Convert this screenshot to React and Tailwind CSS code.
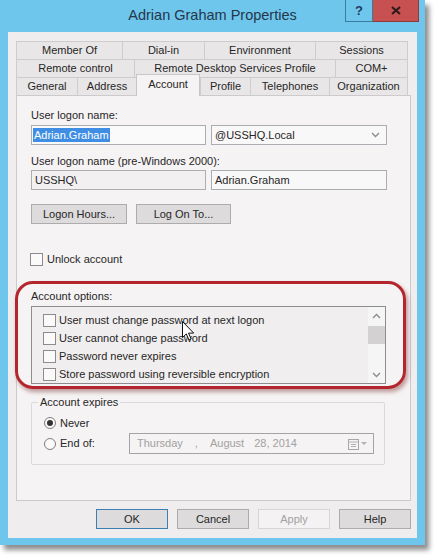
const rowOne = [
  { label: 'Member Of', w: 'w-[106px]' },
  { label: 'Dial-in', w: 'w-[82px]' },
  { label: 'Environment', w: 'w-[111px]' },
  { label: 'Sessions', w: 'w-[93px]' },
];

const rowTwo = [
  { label: 'Remote control', w: 'w-[118px]' },
  { label: 'Remote Desktop Services Profile', w: 'w-[201px]' },
  { label: 'COM+', w: 'w-[73px]' },
];

const rowThree = [
  { label: 'General', w: 'w-[61px]' },
  { label: 'Address', w: 'w-[59px]' },
  { label: 'Account', w: 'w-[64px]', active: true },
  { label: 'Profile', w: 'w-[50px]' },
  { label: 'Telephones', w: 'w-[79px]' },
  { label: 'Organization', w: 'w-[79px]' },
];

const options = [
  'User must change password at next logon',
  'User cannot change password',
  'Password never expires',
  'Store password using reversible encryption',
];

const TabRow = ({ tabs }) => (
  <div className="flex items-end h-[18px]">
    {tabs.map((t) =>
      t.active ? (
        <div
          key={t.label}
          className={`${t.w} h-[22px] -mb-px relative z-10 flex items-center justify-center border border-b-0 border-[#c9c6c7] bg-[#f6f3f4] pb-[2px]`}
        >
          {t.label}
        </div>
      ) : (
        <div
          key={t.label}
          className={`${t.w} h-[18px] flex items-center justify-center border-t border-l last:border-r border-[#cfcccd] bg-[#e9e6e7]`}
        >
          {t.label}
        </div>
      )
    )}
  </div>
);

const Check = () => <span className="w-[13px] h-[13px] border border-[#8d8b8c] bg-[#fbfafa] shrink-0" />;

const Chevron = ({ up }) => (
  <svg width="9" height="6" viewBox="0 0 9 6" className={up ? 'rotate-180' : ''}>
    <path d="M1 1l3.5 3.5L8 1" fill="none" stroke="#8a8a8a" strokeWidth="1.3" />
  </svg>
);

const Cursor = () => (
  <svg width="12" height="20" viewBox="0 0 12 20" className="absolute left-[150px] top-[14px] z-20">
    <path d="M0.5 0.5v16l3.8-3.6 2.6 6 2.2-1-2.6-5.8h5.2z" fill="#fff" stroke="#111" strokeWidth="1" strokeLinejoin="round" />
  </svg>
);

const Btn = ({ children, className = '' }) => (
  <div className={`h-[20px] flex items-center justify-center border ${className}`}>{children}</div>
);

export default function App() {
  return (
    <div className="w-[441px] h-[559px] bg-white font-['Liberation_Sans',Arial,sans-serif] text-[11px] text-[#262626]">
      <div className="relative w-[425px] h-[545px] bg-[#6ec6ec] flex flex-col shadow-[4px_5px_5px_rgba(0,0,0,0.45)]">
        {/* title bar */}
        <div className="h-[32px] flex items-center justify-center text-[14.5px] text-[#24374b] pb-[1px]">
          Adrian Graham Properties
        </div>
        <div className="absolute top-0 right-[6px] flex h-[22px]">
          <div className="w-[28px] flex items-center justify-center border border-[#3b7b9d] border-t-0 font-bold text-[13px] text-[#1e3d63]">
            ?
          </div>
          <div className="w-[46px] flex items-center justify-center bg-[#c75050] border border-[#8f3a3a] border-t-0 border-l-0">
            <svg width="10" height="9" viewBox="0 0 10 9">
              <path d="M1 1l8 7M9 1l-8 7" stroke="#2a1a1a" strokeWidth="2" />
            </svg>
          </div>
        </div>

        {/* client area */}
        <div className="mx-[8px] h-[506px] bg-[#f0edee] pl-[8px] pt-[9px] flex flex-col">
          <div className="w-[392px] flex flex-col">
            <TabRow tabs={rowOne} />
            <TabRow tabs={rowTwo} />
            <TabRow tabs={rowThree} />
          </div>

          {/* Account page */}
          <div className="w-[395px] h-[406px] border border-[#cdcacb] bg-[#f6f3f4] pl-[14px] flex flex-col">
            <div className="mt-[12px] h-[14px] leading-[14px]">User logon name:</div>
            <div className="mt-[3px] flex gap-[5px]">
              <div className="w-[175px] h-[20px] border border-[#abadb3] bg-[#fbfafa] flex items-center px-px">
                <span className="bg-[#3f8ee4] text-white px-px leading-[14px]">Adrian.Graham</span>
              </div>
              <div className="w-[176px] h-[20px] border border-[#abadb3] bg-[#f9f8f8] flex items-center justify-between pl-[3px] pr-[6px]">
                <span>@USSHQ.Local</span>
                <Chevron />
              </div>
            </div>

            <div className="mt-[9px] h-[14px] leading-[14px]">User logon name (pre-Windows 2000):</div>
            <div className="mt-[2px] flex gap-[5px]">
              <div className="w-[175px] h-[20px] border border-[#abadb3] bg-[#f3f0f1] flex items-center px-[3px]">USSHQ\</div>
              <div className="w-[176px] h-[20px] border border-[#abadb3] bg-[#f9f8f8] flex items-center px-[3px]">Adrian.Graham</div>
            </div>

            <div className="mt-[14px] flex gap-[9px]">
              <Btn className="w-[96px] bg-[#dddbdc] border-[#adabac]">Logon Hours...</Btn>
              <Btn className="w-[95px] bg-[#dddbdc] border-[#adabac]">Log On To...</Btn>
            </div>

            <div className="mt-[28px] h-[14px] flex items-center gap-[4px] -ml-px">
              <Check />
              <span>Unlock account</span>
            </div>

            {/* highlighted account options */}
            <div className="mt-[15px] -ml-[16px] w-[391px] h-[108px] border-[3px] border-[#b3262d] rounded-[18px] shadow-[2px_3px_4px_rgba(120,40,40,0.45)] pl-[13px] pt-[5px]">
              <div className="h-[14px] leading-[14px]">Account options:</div>
              <div className="relative mt-[3px] w-[355px] h-[78px] border border-[#8e8c8d] bg-[#f1eeef] flex">
                <div className="flex-1 pt-[4px] pl-[11px] flex flex-col">
                  {options.map((o) => (
                    <div key={o} className="h-[18px] flex items-center gap-[3px]">
                      <Check />
                      <span>{o}</span>
                    </div>
                  ))}
                </div>
                <div className="w-[17px] bg-[#f6f5f5] flex flex-col">
                  <div className="h-[17px] flex items-center justify-center">
                    <Chevron up />
                  </div>
                  <div className="mt-[2px] h-[18px] bg-[#d3d1d2]" />
                  <div className="flex-1" />
                  <div className="h-[17px] flex items-center justify-center">
                    <Chevron />
                  </div>
                </div>
                <Cursor />
              </div>
            </div>

            {/* account expiry */}
            <fieldset className="mt-[6px] w-[354px] h-[70px] border border-[#dcd9da] rounded-[2px] pl-[12px]">
              <legend className="ml-[-6px] px-[2px] leading-[14px]">Account expires</legend>
              <div className="mt-[7px] h-[14px] flex items-center gap-[4px]">
                <span className="w-[12px] h-[12px] rounded-full border border-[#7f7d7e] bg-[#fbfafa] flex items-center justify-center">
                  <span className="w-[6px] h-[6px] rounded-full bg-[#333]" />
                </span>
                <span>Never</span>
              </div>
              <div className="mt-[3px] h-[21px] flex items-center">
                <span className="w-[12px] h-[12px] rounded-full border border-[#7f7d7e] bg-[#fbfafa]" />
                <span className="ml-[4px] w-[69px]">End of:</span>
                <div className="w-[245px] h-[21px] border border-[#a5a3a4] bg-[#f5f3f3] flex items-center pl-[7px] pr-[6px] text-[#a3a1a2]">
                  <span>Thursday</span>
                  <span className="ml-[12px]">,</span>
                  <span className="ml-[12px]">August</span>
                  <span className="ml-[10px]">28, 2014</span>
                  <span className="ml-auto flex items-center gap-[2px]">
                    <svg width="11" height="12" viewBox="0 0 11 12">
                      <rect x="0.5" y="1.5" width="10" height="10" fill="none" stroke="#a9a7a8" />
                      <path d="M0.5 4h10M3 6.5h5M3 8.5h5" stroke="#b3b1b2" />
                    </svg>
                    <svg width="6" height="4" viewBox="0 0 6 4">
                      <path d="M0 0h6L3 3z" fill="#b3b1b2" />
                    </svg>
                  </span>
                </div>
              </div>
            </fieldset>
          </div>

          {/* dialog buttons */}
          <div className="mt-[8px] flex justify-end gap-[9px] pr-[6px]">
            <Btn className="w-[72px] bg-[#dddbdc] border-[#3c7fb1]">OK</Btn>
            <Btn className="w-[72px] bg-[#dddbdc] border-[#adabac]">Cancel</Btn>
            <Btn className="w-[72px] bg-[#f4f2f3] border-[#d7d5d6] text-[#a3a1a2]">Apply</Btn>
            <Btn className="w-[72px] bg-[#dddbdc] border-[#adabac]">Help</Btn>
          </div>
        </div>
      </div>
    </div>
  );
}
